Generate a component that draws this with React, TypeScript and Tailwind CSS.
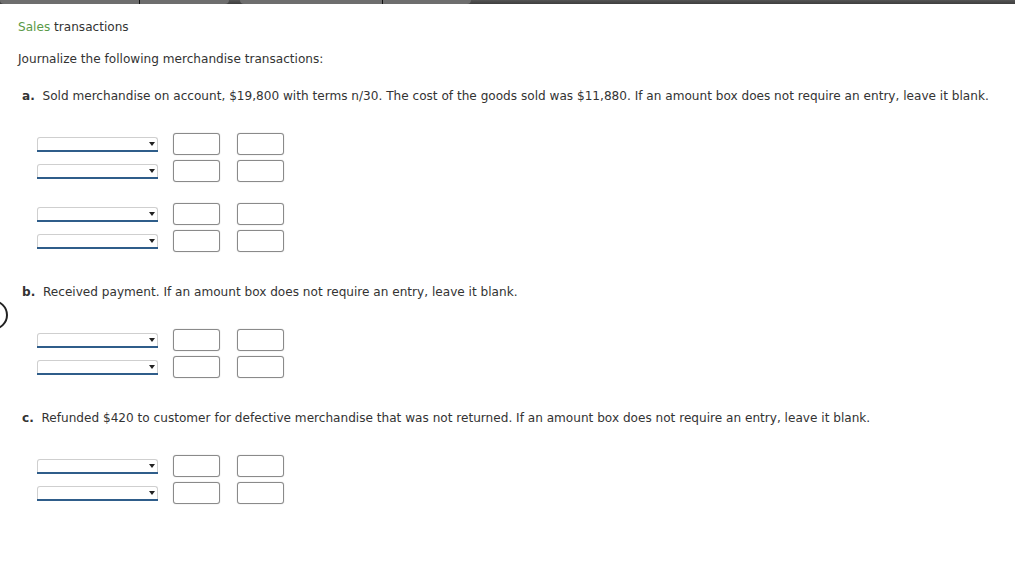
const font = { fontFamily: '"DejaVu Sans", Verdana, sans-serif' };

// small select with dark underline and a caret on the right
const AccountSelect = () => (
  <div className="relative h-[15px] w-[121px] rounded-t-[3px] border border-b-0 border-[#cfcfcf] bg-white">
    <div className="absolute inset-x-[-1px] bottom-0 h-[2px] bg-[#2f5d8a]" />
    <div className="absolute right-[2px] top-[4px] h-0 w-0 border-x-[3.5px] border-t-[4px] border-x-transparent border-t-[#222]" />
  </div>
);

const AmountBox = () => (
  <div className="h-[22px] w-[47px] rounded-[3px] border border-[#8a8a8a] bg-white shadow-[0_0_1px_rgba(0,0,0,0.35)]" />
);

const EntryRow = () => (
  <div className="flex items-end">
    <div className="pb-[3px]">
      <AccountSelect />
    </div>
    <div className="ml-[15px]">
      <AmountBox />
    </div>
    <div className="ml-[17px]">
      <AmountBox />
    </div>
  </div>
);

const Entry = ({ className = "" }: { className?: string }) => (
  <div className={`flex flex-col gap-[5px] pl-[37px] ${className}`}>
    <EntryRow />
    <EntryRow />
  </div>
);

const Tab = ({ w, split }: { w: number; split: number }) => (
  <div className="flex h-[4px] rounded-b-[4px] bg-[#6e6e6e]" style={{ width: w }}>
    <div className="h-full border-r border-[#111]" style={{ width: split }} />
  </div>
);

export default function App() {
  return (
    <div className="relative min-h-[564px] w-[1018px] overflow-hidden bg-white text-[12.1px] leading-4 text-[#333]" style={font}>
      {/* toolbar strip */}
      <div className="flex h-[4px] w-[1015px] bg-gradient-to-b from-[#555] to-[#3e3e3e]">
        <Tab w={229} split={140} />
        <div className="w-[11px]" />
        <Tab w={231} split={143} />
      </div>

      <div className="absolute left-[-22px] top-[300px] h-[30px] w-[30px] rounded-full border-2 border-[#222]" />

      <div className="pl-[18px] pt-[15px]">
        <p>
          <span className="text-[#5a9a48]">Sales</span> transactions
        </p>
        <p className="mt-[16px]">Journalize the following merchandise transactions:</p>
      </div>

      <p className="mt-[21px] pl-[22px]">
        <b>a.</b>&nbsp; Sold merchandise on account, $19,800 with terms n/30. The cost of the goods sold was $11,880. If an amount box does not require an entry, leave it blank.
      </p>
      <Entry className="mt-[29px]" />
      <Entry className="mt-[21px]" />

      <p className="mt-[32px] pl-[22px]">
        <b>b.</b>&nbsp; Received payment. If an amount box does not require an entry, leave it blank.
      </p>
      <Entry className="mt-[29px]" />

      <p className="mt-[32px] pl-[22px]">
        <b>c.</b>&nbsp; Refunded $420 to customer for defective merchandise that was not returned. If an amount box does not require an entry, leave it blank.
      </p>
      <Entry className="mt-[29px]" />
    </div>
  );
}
